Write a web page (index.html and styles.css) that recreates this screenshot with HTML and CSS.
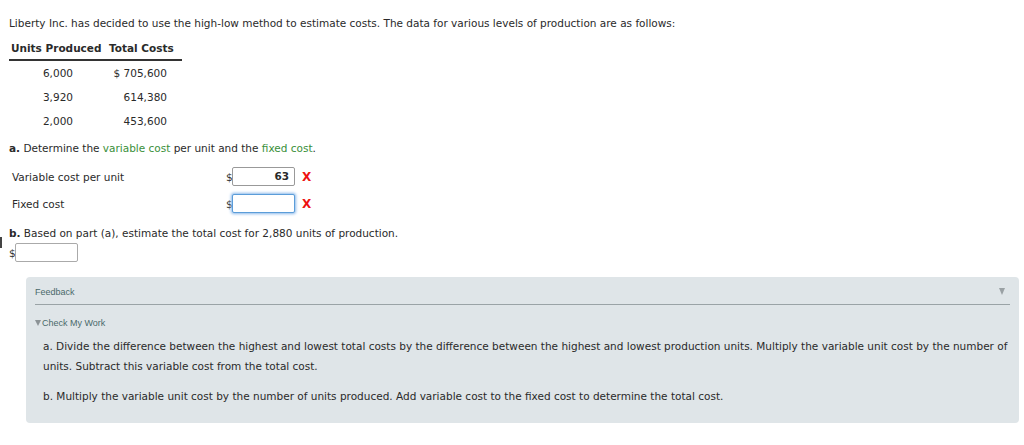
FILE: index.html
```html
<!DOCTYPE html>
<html>
<head>
<meta charset="utf-8">
<link rel="stylesheet" href="styles.css">
</head>
<body>
<div class="page">
  <p class="intro">Liberty Inc. has decided to use the high-low method to estimate costs. The data for various levels of production are as follows:</p>
  <table class="data">
    <colgroup><col class="w1"><col class="w2"></colgroup>
    <thead>
      <tr><th>Units Produced</th><th>Total Costs</th></tr>
    </thead>
    <tbody>
      <tr><td class="c1">6,000</td><td class="c2">$ 705,600</td></tr>
      <tr><td class="c1">3,920</td><td class="c2">614,380</td></tr>
      <tr><td class="c1">2,000</td><td class="c2">453,600</td></tr>
    </tbody>
  </table>
  <p class="part"><b>a.</b> Determine the <span class="term">variable cost</span> per unit and the <span class="term">fixed cost</span>.</p>
  <div class="answers">
    <div class="arow">
      <span class="alabel">Variable cost per unit</span>
      <span class="cur">$</span><span class="box filled">63</span><span class="wrong">X</span>
    </div>
    <div class="arow">
      <span class="alabel">Fixed cost</span>
      <span class="cur">$</span><span class="box focus"></span><span class="wrong">X</span>
    </div>
  </div>
  <p class="part partb"><b>b.</b> Based on part (a), estimate the total cost for 2,880 units of production.</p>
  <div class="brow"><span class="marker"></span><span class="cur">$</span><span class="box small"></span></div>
  <div class="feedback">
    <div class="fb-head"><span>Feedback</span><span class="tri"></span></div>
    <div class="fb-check"><span class="tri2"></span>Check My Work</div>
    <p class="fb-text">a. Divide the difference between the highest and lowest total costs by the difference between the highest and lowest production units. Multiply the variable unit cost by the number of units. Subtract this variable cost from the total cost.</p>
    <p class="fb-text">b. Multiply the variable unit cost by the number of units produced. Add variable cost to the fixed cost to determine the total cost.</p>
  </div>
</div>
</body>
</html>
```
FILE: styles.css
```css
html, body {
  margin: 0;
  padding: 0;
  background: #ffffff;
}
body {
  font-family: "DejaVu Sans", Verdana, sans-serif;
  font-size: 10.5px;
  color: #2a2a2a;
}
.page {
  padding: 16px 0 0 9px;
}
p { margin: 0; }
.intro {
  line-height: 14px;
}
.data {
  border-collapse: collapse;
  table-layout: fixed;
  width: 173px;
  margin-top: 4px;
}
.data col.w1 { width: 98px; }
.data col.w2 { width: 75px; }
.data th {
  font-weight: bold;
  text-align: left;
  padding: 7px 0 4px 2px;
  border-bottom: 2px solid #333333;
  line-height: 14px;
  white-space: nowrap;
}
.data td {
  text-align: right;
  line-height: 14px;
  padding: 5px 0 5px 0;
}
.data tbody tr:first-child td { padding-top: 5px; }
.data td.c1 { padding-right: 34px; }
.data td.c2 { padding-right: 15px; }
.part {
  margin-top: 8px;
  line-height: 14px;
}
.term { color: #3a8f3a; }
.answers {
  margin-top: 12px;
  display: flex;
  flex-direction: column;
  gap: 8px;
}
.arow {
  display: flex;
  align-items: center;
  height: 19px;
}
.alabel {
  width: 214px;
  padding-left: 3px;
}
.cur {
  color: #333333;
  width: 6px;
  display: inline-block;
}
.box {
  display: inline-block;
  box-sizing: border-box;
  width: 63px;
  height: 19px;
  border: 1px solid #aaaaaa;
  border-radius: 2px;
  background: #ffffff;
  text-align: right;
  padding: 2px 5px 0 0;
  font-weight: bold;
}
.box.filled { border-color: #999999; }
.box.focus {
  border: 1px solid #5b9dd9;
  box-shadow: 0 0 3px 1px #8ab8ea;
}
.wrong {
  color: #ee1111;
  font-weight: bold;
  font-size: 12px;
  margin-left: 7px;
}
.partb { margin-top: 13px; }
.brow {
  display: flex;
  align-items: center;
  margin-top: 3px;
  margin-left: -9px;
  height: 19px;
  position: relative;
}
.brow .marker {
  position: absolute;
  left: 0;
  top: -6px;
  width: 2px;
  height: 11px;
  background: #444444;
}
.brow .cur { margin-left: 9px; width: 6px; }
.box.small { width: 63px; }
.feedback {
  margin: 15px 5px 0 17px;
  background: #dfe5e8;
  border-radius: 4px;
  padding: 7px 9px 16px 9px;
  height: 146px;
  box-sizing: border-box;
}
.fb-head {
  display: flex;
  justify-content: space-between;
  align-items: flex-start;
  font-family: "Liberation Sans", Arial, sans-serif;
  font-size: 9px;
  color: #4a6a6a;
  border-bottom: 1px solid #9aa3a6;
  padding: 2px 0 6px 0;
  line-height: 12px;
}
.tri {
  width: 0;
  height: 0;
  border-left: 3px solid transparent;
  border-right: 3px solid transparent;
  border-top: 7px solid #9aa1a4;
  margin: 2px 5px 0 0;
}
.fb-check {
  font-family: "Liberation Sans", Arial, sans-serif;
  font-size: 9px;
  color: #4a6a6a;
  margin-top: 12px;
  line-height: 12px;
  display: flex;
  align-items: center;
}
.tri2 {
  width: 0;
  height: 0;
  border-left: 3px solid transparent;
  border-right: 3px solid transparent;
  border-top: 6px solid #8c9396;
  margin-right: 1px;
}
.fb-text {
  margin: 7px 0 0 8px;
  line-height: 20px;
  color: #2a2a2a;
}
.fb-text + .fb-text { margin-top: 10px; }
```
